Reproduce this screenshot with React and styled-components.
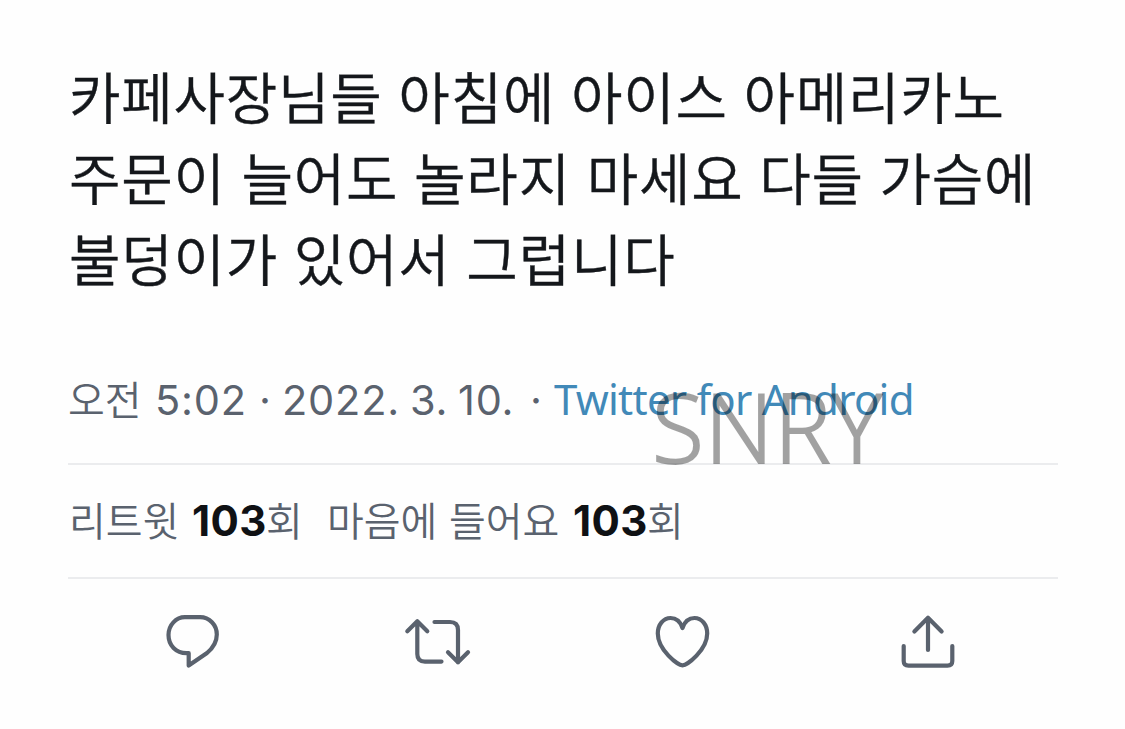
import styled, { createGlobalStyle, css } from 'styled-components'

const GlobalStyle=createGlobalStyle`
*{
  box-sizing:border-box;
}
body{
  margin:0;
  background-color:#fefefe;
  font-family:"Noto Sans CJK KR",sans-serif;
}
`;
const Post=styled.article`
display:flex;
flex-direction:column;
width:1125px;
height:729px;
padding:54px 67px 0 68px;
overflow:hidden;
`;
const PostText=styled.p`
margin:0;
padding-left:1px;
font-size:56px;
font-weight:350;
line-height:81px;
word-spacing:2.5px;
letter-spacing:0.75px;
color:#14171b;
-webkit-text-stroke:0.4px #14171b;
white-space:nowrap;
`;
const Row=styled.div`
display:flex;
align-items:baseline;
flex-shrink:0;
white-space:nowrap;
color:#5a626e;
font-size:40px;
font-weight:350;
line-height:60px;
border-bottom:2px solid #ebecee;
`;
const MetaRow=styled(Row)`
position:relative;
height:168px;
padding-top:71px;
`;
const StatsRow=styled(Row)`
height:114px;
padding-top:24px;
padding-left:1px;
`;
const Piece=styled.span`
display:inline-block;
flex-shrink:0;
width:${(p)=>p.$width}px;
${(p)=>p.$latin && css`
font-family:Inter,"Noto Sans CJK KR",sans-serif;
font-size:41.5px;
font-weight:400;
letter-spacing:0.8px;
`}
${(p)=>p.$strong && css`
font-weight:700;
font-size:42px;
letter-spacing:0.4px;
color:#0f1114;
`}
`;
const SourceLink=styled.a`
font-family:"Noto Sans",sans-serif;
font-size:42px;
font-weight:400;
letter-spacing:-0.75px;
color:#4189b8;
`;
const Watermark=styled.span`
position:absolute;
left:584px;
top:79px;
font-family:"Open Sans","Noto Sans",sans-serif;
font-weight:300;
font-size:95px;
line-height:100px;
letter-spacing:1px;
color:#000;
-webkit-text-stroke:2px #000;
stroke-linejoin:round;
opacity:0.36;
`;
const Actions=styled.div`
display:grid;
grid-template-columns:repeat(4,245.3px);
padding:31px 0 0 2px;
`;
const ActionButton=styled.button`
display:flex;
justify-content:center;
padding:0;
border:none;
background:none;
color:#5a626e;

svg{
  width:70px;
  height:64px;
  fill:none;
  stroke:currentColor;
  stroke-width:4.2;
  stroke-linecap:round;
  stroke-linejoin:round;
}
`;

const actions=[
  { label:'답글', path:'M27 7.2H42C51.5 7.2 58.8 15 58.8 24.5C58.8 32 55 38 49 43L30.7 55.5V43.2H28.5C18 43 10.5 35.5 10.5 25C10.5 15 18 7.2 27 7.2Z' },
  { label:'리트윗', path:'M4.3 21.2L14.3 11.3L24.3 21.2M14.3 11.3V44Q14.3 51.6 22 51.6H38.5M31.5 12H47Q55 12 55 20V52.5M45 42.3L55 52.2L65 42.3' },
  { label:'마음에 들어요', path:'M34.5 55.3C30 55.3 9.8 40 9.8 23.5C9.8 14.5 15.5 8 22.5 8C28.5 8 32.5 12 34.5 18C36.5 12 40.5 8 46.5 8C53.5 8 59.2 14.5 59.2 23.5C59.2 40 39 55.3 34.5 55.3Z' },
  { label:'공유', path:'M20.4 21.5L34 7.8L47.6 21.5M34 7.8V40M9.7 36V51Q9.7 55.6 14.5 55.6H53.5Q58.3 55.6 58.3 51V36' },
]

function App() {
  return (
    <>
    <GlobalStyle />
    <Post>
      <PostText>
        카페사장님들 아침에 아이스 아메리카노<br />
        주문이 늘어도 놀라지 마세요 다들 가슴에<br />
        불덩이가 있어서 그럽니다
      </PostText>

      <MetaRow>
        <Piece $width={87}>오전</Piece>
        <Piece $width={104} $latin>5:02</Piece>
        <Piece $width={23} $latin>·</Piece>
        <Piece $width={128} $latin>2022.</Piece>
        <Piece $width={48} $latin>3.</Piece>
        <Piece $width={72} $latin>10.</Piece>
        <Piece $width={24} $latin>·</Piece>
        <SourceLink>Twitter for Android</SourceLink>
        <Watermark>SNRY</Watermark>
      </MetaRow>

      <StatsRow>
        <Piece $width={123}>리트윗</Piece>
        <Piece $width={74} $latin $strong>103</Piece>
        <Piece $width={61}>회</Piece>
        <Piece $width={122}>마음에</Piece>
        <Piece $width={124}>들어요</Piece>
        <Piece $width={74} $latin $strong>103</Piece>
        <Piece $width={40}>회</Piece>
      </StatsRow>

      <Actions>
        {actions.map((action)=>(
          <ActionButton key={action.label} aria-label={action.label}>
            <svg viewBox="0 0 70 64"><path d={action.path} /></svg>
          </ActionButton>
        ))}
      </Actions>
    </Post>
    </>
  );
}

export default App;
